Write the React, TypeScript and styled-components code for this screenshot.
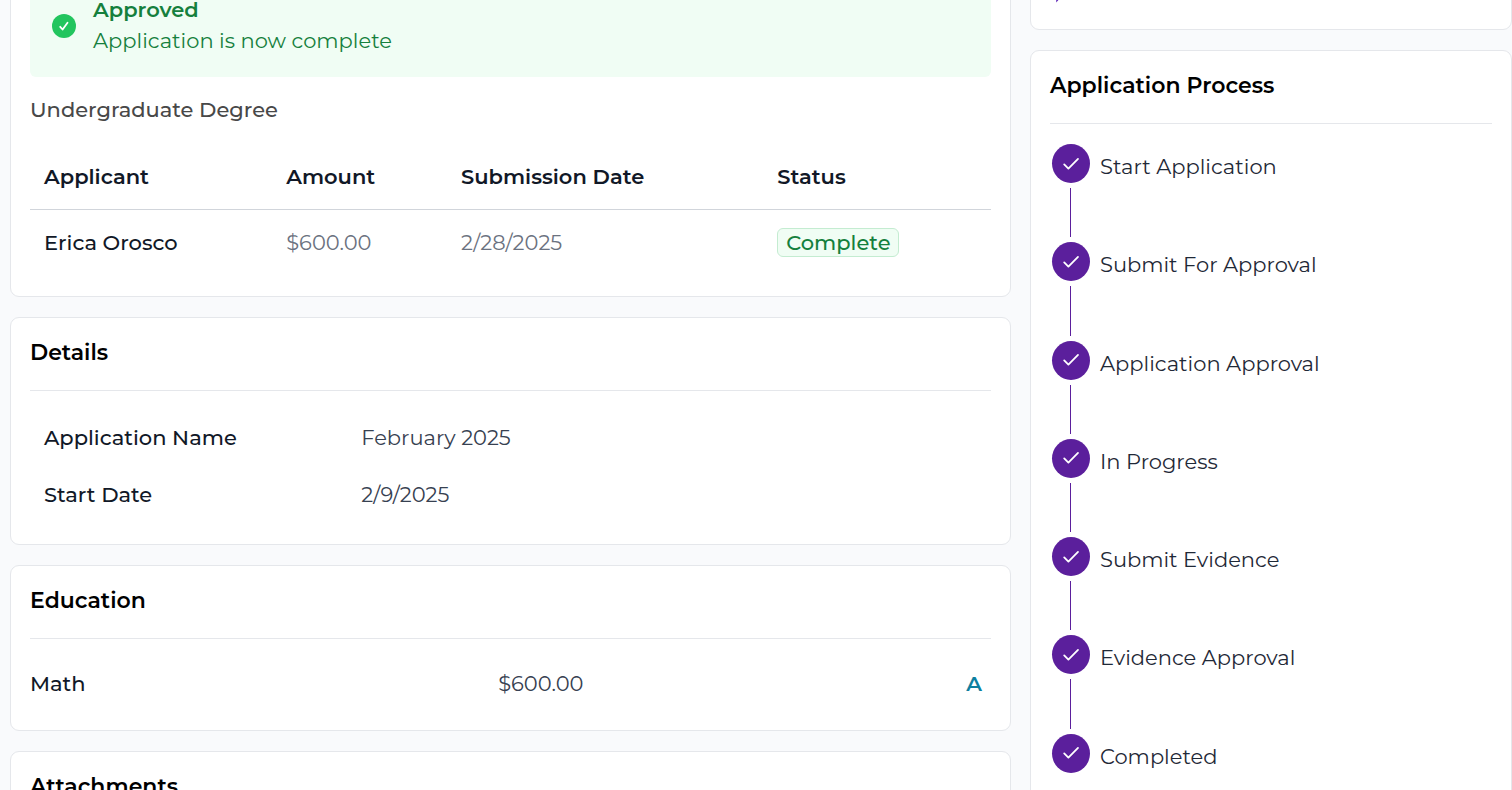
import React from "react";
import styled, { createGlobalStyle, css } from "styled-components";

const GlobalStyle = createGlobalStyle`
  *, *::before, *::after { box-sizing: border-box; }
  body {
    margin: 0;
    background: #f9fafc;
    color: #111827;
    font-family: Montserrat, Inter, "Open Sans", sans-serif;
    font-size: 21px;
    line-height: 30px;
  }
  h2, h3, p, dl, dd, ol { margin: 0; padding: 0; }
`;

const Viewport = styled.main`
  height: 100vh;
  overflow: hidden;
`;

const Columns = styled.div`
  display: grid;
  grid-template-columns: minmax(0, 27fr) minmax(0, 13fr);
  gap: 19px;
  margin-top: -45px;
  padding-left: 10px;
`;

const Column = styled.div`
  display: flex;
  flex-direction: column;
  gap: 20px;
`;

const Card = styled.section`
  padding: 19px;
  background: #fff;
  border: 1px solid #e5e7eb;
  border-radius: 9px;
`;

const CardTitle = styled.h2`
  padding-bottom: 21px;
  border-bottom: 1px solid #e5e7eb;
  color: #000;
  font-size: 22px;
  font-weight: 600;
  line-height: 32px;
`;

const Alert = styled.div`
  display: flex;
  align-items: center;
  gap: 17px;
  padding: 19px 22px;
  background: #f0fdf4;
  border-radius: 6px;
  color: #15803d;
`;

const AlertBody = styled.div`
  padding-bottom: 2px;
`;

const AlertTitle = styled.h3`
  font-size: 21px;
  font-weight: 600;
  line-height: 31px;
`;

const AlertText = styled.p`
  line-height: 31px;
`;

const Degree = styled.p`
  margin: 18px 0;
  color: #484848;
  font-weight: 500;
`;

const Table = styled.table`
  width: 100%;
  table-layout: fixed;
  border-collapse: collapse;
  text-align: left;
`;

const Col = styled.col<{ $share: string }>`
  width: ${(p) => p.$share};
`;

const bodyCell = css`
  padding: 18px 14px 19px;
`;

const HeadCell = styled.th`
  padding: 19px 14px 17px;
  border-bottom: 1px solid #d1d5db;
  font-weight: 600;
`;

const NameCell = styled.th`
  ${bodyCell}
  font-weight: 500;
`;

const Cell = styled.td`
  ${bodyCell}
  color: #6b7280;
`;

const Badge = styled.span`
  display: inline-block;
  padding: 0 8px;
  background: #f0fdf4;
  border: 1px solid #c4ecd1;
  border-radius: 6px;
  color: #15803d;
  font-weight: 500;
  line-height: 27px;
`;

const Details = styled.dl`
  padding: 19px 0 1px;
`;

const DetailRow = styled.div`
  display: grid;
  grid-template-columns: 34% 1fr;
  padding: 13px 14px 14px;

  dt { font-weight: 500; }
  dd { color: #374151; }
`;

const EducationRow = styled.div`
  display: grid;
  grid-template-columns: 1fr 1fr auto;
  padding: 30px 9px 12px 0;
`;

const Subject = styled.span`
  font-weight: 500;
`;

const Price = styled.span`
  color: #374151;
`;

const Grade = styled.span`
  color: #0e7f9f;
  font-weight: 600;
`;

const CommentsCard = styled(Card)`
  height: 75px;
`;

const CommentsLink = styled.a`
  display: flex;
  color: #5b21b6;
`;

const Steps = styled.ol`
  display: grid;
  grid-auto-rows: 1fr;
  min-height: 688px;
  margin-top: 20px;
  list-style: none;
`;

const Step = styled.li`
  display: flex;
  gap: 10px;
  padding-left: 2px;
  color: #1f2937;
`;

const Rail = styled.div`
  display: flex;
  flex-direction: column;
`;

const StepDot = styled.span`
  display: grid;
  place-items: center;
  width: 38px;
  height: 39px;
  border-radius: 50%;
  background: #5b1f9c;
`;

const Connector = styled.span`
  flex: 1;
  width: 1px;
  margin: 5px 18px;
  background: #5b1f9c;
`;

const StepLabel = styled.span`
  padding-top: 8px;
`;

const steps = [
  "Start Application",
  "Submit For Approval",
  "Application Approval",
  "In Progress",
  "Submit Evidence",
  "Evidence Approval",
  "Completed",
];

const ApprovedIcon = () => (
  <svg width="24" height="24" viewBox="0 0 24 24" fill="none" aria-hidden="true">
    <circle cx="12" cy="12" r="12" fill="#22c55e" />
    <path d="M8.2 12.8l2.4 2.7 4.9-6.7" stroke="#fff" strokeWidth="1.8" strokeLinecap="round" strokeLinejoin="round" />
  </svg>
);

const StepCheck = () => (
  <svg width="18" height="14" viewBox="0 0 18 14" fill="none" aria-hidden="true">
    <path d="M2.2 7.4l4.2 4.2L16 1.9" stroke="#fff" strokeWidth="1.8" strokeLinecap="round" strokeLinejoin="round" />
  </svg>
);

export default function App() {
  return (
    <>
      <GlobalStyle />
      <Viewport>
        <Columns>
          <Column>
            <Card>
              <Alert role="status">
                <ApprovedIcon />
                <AlertBody>
                  <AlertTitle>Approved</AlertTitle>
                  <AlertText>Application is now complete</AlertText>
                </AlertBody>
              </Alert>
              <Degree>Undergraduate Degree</Degree>
              <Table>
                <colgroup>
                  <Col $share="25.2%" />
                  <Col $share="18.2%" />
                  <Col $share="32.9%" />
                  <Col $share="23.7%" />
                </colgroup>
                <thead>
                  <tr>
                    <HeadCell scope="col">Applicant</HeadCell>
                    <HeadCell scope="col">Amount</HeadCell>
                    <HeadCell scope="col">Submission Date</HeadCell>
                    <HeadCell scope="col">Status</HeadCell>
                  </tr>
                </thead>
                <tbody>
                  <tr>
                    <NameCell scope="row">Erica Orosco</NameCell>
                    <Cell>$600.00</Cell>
                    <Cell>2/28/2025</Cell>
                    <Cell><Badge>Complete</Badge></Cell>
                  </tr>
                </tbody>
              </Table>
            </Card>

            <Card>
              <CardTitle>Details</CardTitle>
              <Details>
                <DetailRow>
                  <dt>Application Name</dt>
                  <dd>February 2025</dd>
                </DetailRow>
                <DetailRow>
                  <dt>Start Date</dt>
                  <dd>2/9/2025</dd>
                </DetailRow>
              </Details>
            </Card>

            <Card>
              <CardTitle>Education</CardTitle>
              <EducationRow>
                <Subject>Math</Subject>
                <Price>$600.00</Price>
                <Grade>A</Grade>
              </EducationRow>
            </Card>

            <Card>
              <CardTitle>Attachments</CardTitle>
            </Card>
          </Column>

          <Column>
            <CommentsCard>
              <CommentsLink href="#comments" aria-label="Comments">
                <svg width="20" height="28" viewBox="0 0 20 28" fill="none" aria-hidden="true">
                  <path d="M2 8h16v14h-8l-3 3.5V22H2z" stroke="currentColor" strokeWidth="1.5" />
                </svg>
              </CommentsLink>
            </CommentsCard>
            <Card>
              <CardTitle>Application Process</CardTitle>
              <Steps>
                {steps.map((label, i) => (
                  <Step key={label}>
                    <Rail>
                      <StepDot><StepCheck /></StepDot>
                      {i < steps.length - 1 && <Connector />}
                    </Rail>
                    <StepLabel>{label}</StepLabel>
                  </Step>
                ))}
              </Steps>
            </Card>
          </Column>
        </Columns>
      </Viewport>
    </>
  );
}
